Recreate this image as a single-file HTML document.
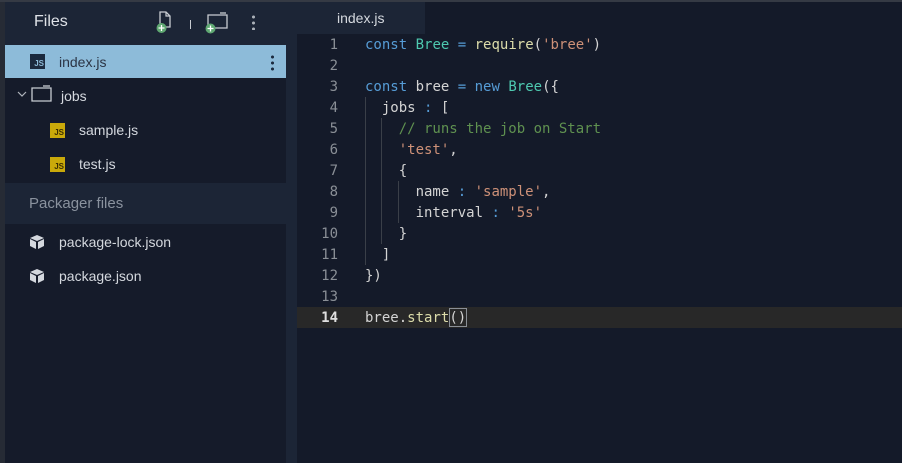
<!DOCTYPE html>
<html><head><style>
*{margin:0;padding:0;box-sizing:border-box}
body{width:902px;height:463px;background:#141a29;position:relative;overflow:hidden;font-family:"Liberation Sans",sans-serif}
.abs{position:absolute}
#top{left:0;top:0;width:902px;height:2px;background:#353a44}
#lstrip{left:0;top:0;width:5px;height:463px;background:#262b35}
#side{left:5px;top:2px;width:281px;height:461px;background:#151b2a}
#hdr{left:5px;top:2px;width:292px;height:43px;background:#1c2536}
#scr{left:286px;top:0;width:11px;height:463px;background:#1c2536}
#tab{left:286px;top:2px;width:139px;height:32px;background:#1c2536}
.t{color:#d4d8de;font-size:14px}
.row{left:5px;width:281px;height:33px}
.js{width:15px;height:15px;font-size:8px;font-weight:bold;text-align:right;padding:6px 1px 0 0;line-height:8px}
.code{font-family:"DejaVu Sans Mono","Liberation Mono",monospace;font-size:14px;white-space:pre}
.ln{left:300px;width:38px;text-align:right;color:#8a8f96}
.k{color:#569cd6}.c{color:#4ec9b0}.f{color:#dcdcaa}.s{color:#ce9178}.g{color:#5f9150}.w{color:#d4d4d4}
.guide{width:1px;background:#3a3f48}
</style></head><body>
<div class="abs" id="side"></div>
<div class="abs" id="hdr"></div>
<div class="abs" id="scr"></div>
<div class="abs" id="tab"></div>
<div class="abs" id="lstrip"></div>
<div class="abs" id="top"></div>
<div class="abs t" style="left:34px;top:13px;font-size:16px;color:#e0e3e8">Files</div>
<svg class="abs" style="left:155px;top:11px" width="24" height="24"><path d="M5 1h6l4 4v11H5z" fill="none" stroke="#c8ccd2" stroke-width="1.3"/><path d="M11 1v4h4" fill="none" stroke="#c8ccd2" stroke-width="1.2"/><circle cx="6.5" cy="17" r="5" fill="#5fa872"/><path d="M6.5 14v6M3.5 17h6" stroke="#fff" stroke-width="1.3"/></svg>
<div class="abs" style="left:190px;top:20px;width:1px;height:9px;background:#c8ccd2"></div>
<svg class="abs" style="left:203px;top:11px" width="28" height="24"><path d="M5 4h19v13H5z" fill="none" stroke="#c8ccd2" stroke-width="1.3"/><path d="M17 2h6" stroke="#c8ccd2" stroke-width="1.3"/><circle cx="7.5" cy="17.5" r="5" fill="#5fa872"/><path d="M7.5 14.5v6M4.5 17.5h6" stroke="#fff" stroke-width="1.3"/></svg>
<div class="abs" style="left:252px;top:14px;width:3px;height:16px;background:radial-gradient(circle,#aab0b8 1.4px,transparent 1.6px) 0 0/3px 6px"></div>
<div class="abs row" style="top:45px;background:#8dbbd9"></div>
<div class="abs js" style="left:30px;top:54px;background:#1b2a3e;color:#8dbbd9">JS</div>
<div class="abs t" style="left:59px;top:54px;color:#2b3445">index.js</div>
<div class="abs" style="left:271px;top:54px;width:3px;height:18px;background:radial-gradient(circle,#1b2a3e 1.4px,transparent 1.6px) 0 0/3px 6px"></div>
<svg class="abs" style="left:17px;top:91px" width="12" height="8"><path d="M1 1l4 4 4-4" fill="none" stroke="#b0b5bc" stroke-width="1.2"/></svg>
<svg class="abs" style="left:31px;top:85px" width="22" height="18"><path d="M1 3h19v13H1z" fill="none" stroke="#c8ccd2" stroke-width="1.3"/><path d="M12 1h7" stroke="#c8ccd2" stroke-width="1.3"/></svg>
<div class="abs t" style="left:61px;top:88px">jobs</div>
<div class="abs js" style="left:50px;top:123px;background:#c9a90a;color:#3a2e00">JS</div>
<div class="abs t" style="left:79px;top:122px">sample.js</div>
<div class="abs js" style="left:50px;top:157px;background:#c9a90a;color:#3a2e00">JS</div>
<div class="abs t" style="left:79px;top:156px">test.js</div>
<div class="abs" style="left:5px;top:183px;width:281px;height:41px;background:#1c2536"></div>
<div class="abs t" style="left:29px;top:195px;color:#8a929e;font-size:15px">Packager files</div>
<svg class="abs" style="left:29px;top:234px" width="16" height="16"><path d="M8 1l7 3-7 3-7-3z" fill="#d4d8de"/><path d="M1 5l6 3v7l-6-3z" fill="#d4d8de"/><path d="M15 5l-6 3v7l6-3z" fill="#d4d8de"/></svg>
<div class="abs t" style="left:59px;top:234px">package-lock.json</div>
<svg class="abs" style="left:29px;top:268px" width="16" height="16"><path d="M8 1l7 3-7 3-7-3z" fill="#d4d8de"/><path d="M1 5l6 3v7l-6-3z" fill="#d4d8de"/><path d="M15 5l-6 3v7l6-3z" fill="#d4d8de"/></svg>
<div class="abs t" style="left:59px;top:268px">package.json</div>
<div class="abs t" style="left:337px;top:10px">index.js</div>
<div class="abs" style="left:297px;top:307px;width:605px;height:21px;background:#282828"></div>
<div class="abs guide" style="left:365px;top:97px;height:168px"></div>
<div class="abs guide" style="left:381px;top:118px;height:126px"></div>
<div class="abs guide" style="left:398px;top:181px;height:42px"></div>
<div class="abs" style="left:449px;top:308px;width:18px;height:19px;border:1px solid #8a8f96"></div>
<div class="abs code ln" style="top:35px;line-height:21px">1
2
3
4
5
6
7
8
9
10
11
12
13
<span style="color:#e0e0e0;font-weight:bold">14</span></div>
<div class="abs code w" style="left:365px;top:35px;line-height:21px"><span class="k">const</span> <span class="c">Bree</span> <span class="k">=</span> <span class="f">require</span>(<span class="s">'bree'</span>)

<span class="k">const</span> bree <span class="k">=</span> <span class="k">new</span> <span class="c">Bree</span>({
  jobs <span class="k">:</span> [
    <span class="g">// runs the job on Start</span>
    <span class="s">'test'</span>,
    {
      name <span class="k">:</span> <span class="s">'sample'</span>,
      interval <span class="k">:</span> <span class="s">'5s'</span>
    }
  ]
})

bree.<span class="f">start</span>()</div>
</body></html>
